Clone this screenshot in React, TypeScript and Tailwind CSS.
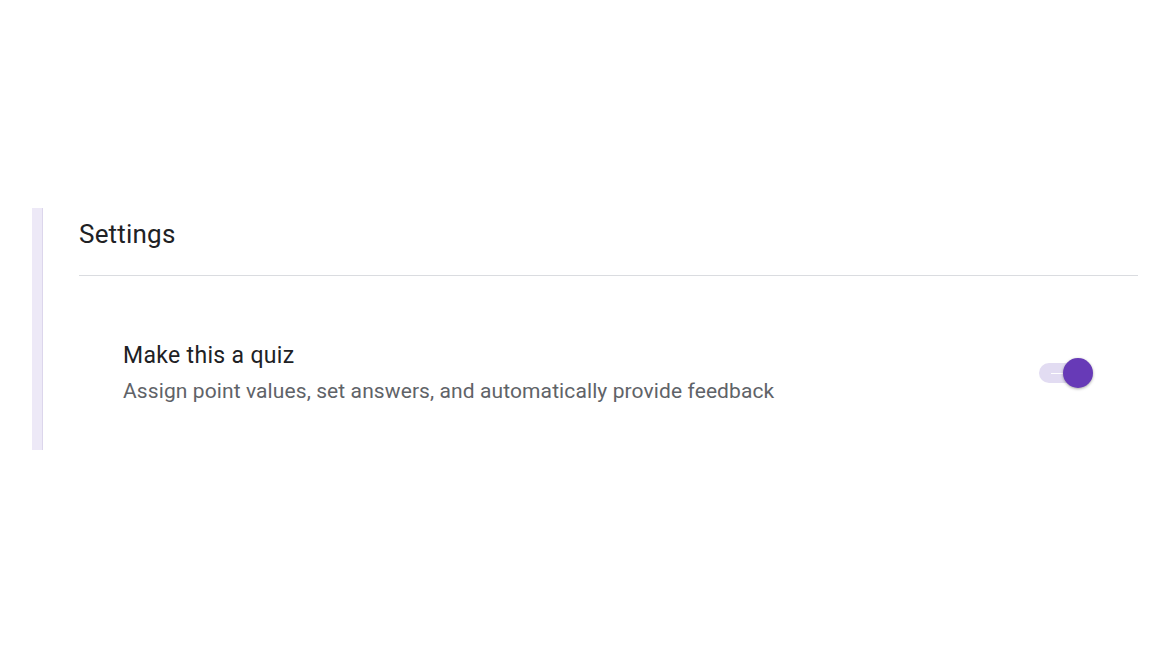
export default function App() {
  return (
    <div className="w-[1170px] h-[658px] bg-white flex items-center" style={{ fontFamily: "Roboto, 'Noto Sans', sans-serif" }}>
      <div className="ml-[32px] w-[1106px] h-[242px] flex">
        <div className="w-[11px] bg-[#ede9f7] border-r border-[#dcd6ec]" />
        <div className="flex-1 pl-[36px] flex flex-col">
          <div className="h-[68px] border-b border-[#dadce0] pt-[10px]">
            <h1 className="text-[26px] text-[#202124] leading-[32px] tracking-[0.2px]">Settings</h1>
          </div>
          <div className="flex items-center pl-[44px] pr-[44px] pt-[66px]">
            <div className="flex-1 flex flex-col">
              <div className="text-[23px] text-[#202124] leading-[28px] tracking-[0.33px]">Make this a quiz</div>
              <div className="text-[21px] text-[#5f6368] leading-[26px] mt-[8px] tracking-[0.1px]">Assign point values, set answers, and automatically provide feedback</div>
            </div>
            <div className="relative w-[56px] h-[32px] flex items-center">
              <div className="ml-[1px] w-[40px] h-[20px] rounded-full bg-[#e2dcf2] flex items-center pl-[12px]">
                <div className="w-[14px] h-[1px] bg-white" />
              </div>
              <div className="absolute right-[1px] top-[1px] w-[30px] h-[30px] rounded-full bg-[#673ab7] shadow-[0_1px_3px_rgba(0,0,0,0.35)]" />
            </div>
          </div>
        </div>
      </div>
    </div>
  );
}
